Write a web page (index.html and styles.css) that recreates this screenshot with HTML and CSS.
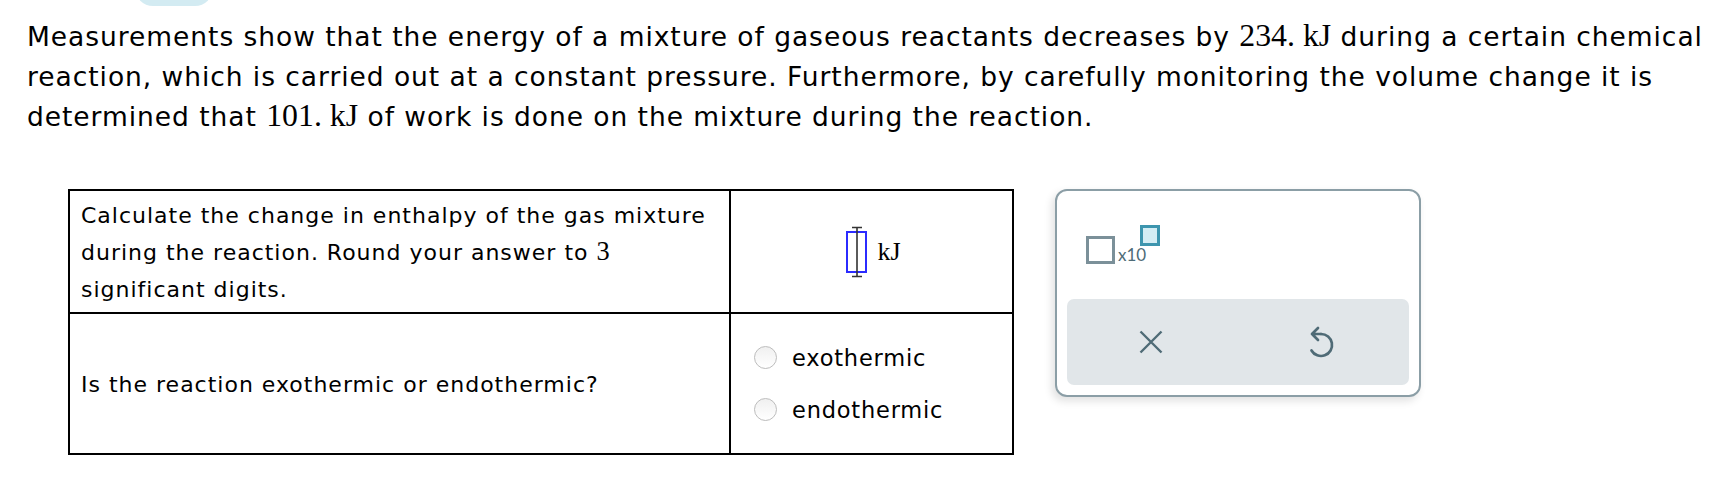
FILE: index.html
```html
<!DOCTYPE html>
<html>
<head>
<meta charset="utf-8">
<link rel="stylesheet" href="styles.css">
</head>
<body>
<div class="tab-bump"></div>
<p class="prompt">Measurements show that the energy of a mixture of gaseous reactants decreases by <span class="math">234.&nbsp;kJ</span> during a certain chemical reaction, which is carried out at a constant pressure. Furthermore, by carefully monitoring the volume change it is determined that <span class="math">101.&nbsp;kJ</span> of work is done on the mixture during the reaction.</p>
<div class="work">
  <table class="qtable">
    <colgroup><col class="col-q"><col class="col-a"></colgroup>
    <tr class="row1">
      <td class="qcell">Calculate the change in enthalpy of the gas mixture during the reaction. Round your answer to <span class="math">3</span> significant digits.</td>
      <td class="acell">
        <div class="answer">
          <span class="input-box">
            <svg class="ibeam" width="14" height="52" viewBox="0 0 14 52"><path d="M2 1.5 H12 M7 1.5 V50.5 M2 50.5 H12" stroke="#333" stroke-width="1.6" fill="none"/></svg>
          </span>
          <span class="unit">kJ</span>
        </div>
      </td>
    </tr>
    <tr class="row2">
      <td class="qcell">Is the reaction exothermic or endothermic?</td>
      <td class="acell radios">
        <label class="radio"><span class="dot"></span>exothermic</label>
        <label class="radio"><span class="dot"></span>endothermic</label>
      </td>
    </tr>
  </table>
  <div class="panel">
    <div class="sci">
      <span class="sci-box"></span><span class="sci-x">x10</span><span class="sci-sup"></span>
    </div>
    <div class="actions">
      <svg class="icon" width="24" height="24" viewBox="0 0 24 24"><path d="M1.5 1.5 L22.5 22.5 M22.5 1.5 L1.5 22.5" stroke="#4f6b76" stroke-width="2.4" fill="none"/></svg>
      <svg class="icon" width="30" height="36" viewBox="0 0 30 36"><path d="M14 10 A11 11 0 1 1 4.5 26.5" stroke="#4f6b76" stroke-width="2.7" fill="none" stroke-linecap="round"/><path d="M11 4 L5 10 L11 16 M5 10 H14" stroke="#4f6b76" stroke-width="2.7" fill="none" stroke-linecap="round" stroke-linejoin="round"/></svg>
    </div>
  </div>
</div>
</body>
</html>
```

FILE: styles.css
```css
html, body {
  margin: 0;
  padding: 0;
  background: #fff;
}
body {
  font-family: "DejaVu Sans", Verdana, sans-serif;
  color: #000;
  width: 1724px;
  height: 496px;
  overflow: hidden;
}
.tab-bump {
  width: 78px;
  height: 30px;
  margin: -24px 0 0 135px;
  background: #d3ebf2;
  border-radius: 0 0 18px 18px;
}
.prompt {
  margin: 11px 0 0 27px;
  width: 1692px;
  font-size: 26.5px;
  letter-spacing: 0.95px;
  line-height: 40px;
}
.math {
  font-family: "Liberation Serif", "Times New Roman", serif;
  font-size: 1.2em;
  letter-spacing: 0;
  line-height: 1;
}
.work {
  display: flex;
  align-items: flex-start;
  margin: 52px 0 0 68px;
}
.qtable {
  border-collapse: collapse;
  border: 2px solid #000;
  table-layout: fixed;
  width: 944px;
}
.col-q { width: 661px; }
.col-a { width: 283px; }
.qtable td {
  border: 2px solid #000;
  padding: 0;
}
.qcell {
  padding: 3px 10px 2px 11px !important;
  font-size: 22px;
  letter-spacing: 1px;
  line-height: 37px;
  vertical-align: middle;
}
.row1 { height: 123px; }
.row2 { height: 141px; }
.acell {
  vertical-align: middle;
}
.answer {
  display: flex;
  align-items: center;
  justify-content: center;
  gap: 10px;
  padding-left: 4px;
}
.input-box {
  position: relative;
  display: block;
  width: 17px;
  height: 38px;
  border: 2px solid #2b2bff;
}
.ibeam {
  position: absolute;
  left: 1.5px;
  top: -7px;
}
.unit {
  font-family: "Liberation Serif", "Times New Roman", serif;
  font-size: 26px;
}
.radios {
  padding: 12px 0 12px 23px !important;
}
.radio {
  display: flex;
  align-items: center;
  gap: 15px;
  font-size: 22.5px;
  letter-spacing: 0.8px;
  height: 52px;
}
.dot {
  width: 23px;
  height: 23px;
  flex: none;
  border-radius: 50%;
  border: 1px solid #bdbdbd;
  background: linear-gradient(#f0f0f0, #fff);
  box-sizing: border-box;
}
.panel {
  margin-left: 41px;
  width: 366px;
  height: 208px;
  box-sizing: border-box;
  border: 2px solid #8b9ea6;
  border-radius: 12px;
  background: #fff;
  box-shadow: -3px 4px 8px rgba(0, 0, 0, 0.12);
  padding: 0 10px 10px 10px;
  display: flex;
  flex-direction: column;
}
.sci {
  display: flex;
  align-items: flex-end;
  height: 73px;
  padding-left: 19px;
  margin-bottom: 35px;
}
.sci-box {
  width: 29px;
  height: 28px;
  box-sizing: border-box;
  border: 3px solid #7b9099;
}
.sci-x {
  font-family: "Lato", "Noto Sans", sans-serif;
  font-size: 17px;
  color: #4e6b77;
  line-height: 1;
  margin: 0 0 1px 3px;
}
.sci-sup {
  align-self: flex-start;
  margin-top: 34px;
  margin-left: -6px;
  width: 20px;
  height: 21px;
  box-sizing: border-box;
  border: 3px solid #3d95ae;
  background: #d4edf4;
}
.actions {
  height: 87px;
  background: #e1e6e9;
  border-radius: 7px;
  display: flex;
  align-items: center;
  justify-content: space-around;
}
```
